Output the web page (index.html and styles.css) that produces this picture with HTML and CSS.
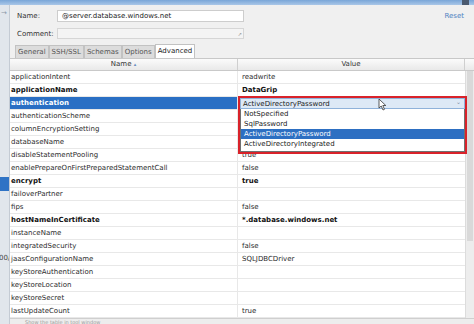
FILE: index.html
```html
<!DOCTYPE html>
<html lang="en">
<head>
    <meta charset="UTF-8">
    <title>Data Source Properties</title>
    <link rel="stylesheet" href="styles.css">
</head>
<body>
    <div class="titlebar">
        <span class="tb-icon"></span>
    </div>

    <div class="window">
        <div class="sidebar">
            <span class="side-arrow">&rarr;</span>
            <div class="side-sel"></div>
            <span class="side-text">00/</span>
        </div>

        <div class="panel">
            <div class="form-row">
                <label class="form-label">Name:</label>
                <div class="input">@server.database.windows.net</div>
                <a class="reset">Reset</a>
            </div>
            <div class="form-row">
                <label class="form-label">Comment:</label>
                <div class="input comment"><span class="expand">&#8599;</span></div>
            </div>

            <div class="tabs">
                <span class="tab">General</span>
                <span class="tab">SSH/SSL</span>
                <span class="tab">Schemas</span>
                <span class="tab">Options</span>
                <span class="tab active">Advanced</span>
            </div>

            <div class="table">
                <div class="thead">
                    <div class="th col-name">Name <span class="sort">&#9652;</span></div>
                    <div class="th col-value">Value</div>
                    <div class="th corner"></div>
                </div>
                <div class="tbody">
                    <div class="rows">
                        <div class="row"><div class="cell col-name">applicationIntent</div><div class="cell col-value">readwrite</div></div>
                        <div class="row bold"><div class="cell col-name">applicationName</div><div class="cell col-value">DataGrip</div></div>
                        <div class="row selected">
                            <div class="cell col-name">authentication</div>
                            <div class="cell col-value">
                                <div class="dropdown">
                                    <div class="combo">
                                        <span>ActiveDirectoryPassword</span>
                                        <span class="chevron">&#8964;</span>
                                    </div>
                                    <ul class="options">
                                        <li>NotSpecified</li>
                                        <li>SqlPassword</li>
                                        <li class="picked">ActiveDirectoryPassword</li>
                                        <li>ActiveDirectoryIntegrated</li>
                                    </ul>
                                </div>
                                <svg class="cursor" width="9" height="13" viewBox="0 0 9 13">
                                    <path d="M1 1 L1 10 L3.2 8 L5 12 L6.5 11.3 L4.8 7.5 L7.8 7.5 Z" fill="#fff" stroke="#333" stroke-width="0.8"/>
                                </svg>
                            </div>
                        </div>
                        <div class="row"><div class="cell col-name">authenticationScheme</div><div class="cell col-value"></div></div>
                        <div class="row"><div class="cell col-name">columnEncryptionSetting</div><div class="cell col-value"></div></div>
                        <div class="row"><div class="cell col-name">databaseName</div><div class="cell col-value"></div></div>
                        <div class="row"><div class="cell col-name">disableStatementPooling</div><div class="cell col-value">true</div></div>
                        <div class="row"><div class="cell col-name">enablePrepareOnFirstPreparedStatementCall</div><div class="cell col-value">false</div></div>
                        <div class="row bold"><div class="cell col-name">encrypt</div><div class="cell col-value">true</div></div>
                        <div class="row"><div class="cell col-name">failoverPartner</div><div class="cell col-value"></div></div>
                        <div class="row"><div class="cell col-name">fips</div><div class="cell col-value">false</div></div>
                        <div class="row bold"><div class="cell col-name">hostNameInCertificate</div><div class="cell col-value">*.database.windows.net</div></div>
                        <div class="row"><div class="cell col-name">instanceName</div><div class="cell col-value"></div></div>
                        <div class="row"><div class="cell col-name">integratedSecurity</div><div class="cell col-value">false</div></div>
                        <div class="row"><div class="cell col-name">jaasConfigurationName</div><div class="cell col-value">SQLJDBCDriver</div></div>
                        <div class="row"><div class="cell col-name">keyStoreAuthentication</div><div class="cell col-value"></div></div>
                        <div class="row"><div class="cell col-name">keyStoreLocation</div><div class="cell col-value"></div></div>
                        <div class="row"><div class="cell col-name">keyStoreSecret</div><div class="cell col-value"></div></div>
                        <div class="row"><div class="cell col-name">lastUpdateCount</div><div class="cell col-value">true</div></div>
                    </div>
                    <div class="scrollbar"><div class="thumb"></div></div>
                </div>
            </div>

            <div class="footer">Show the table in tool window</div>
        </div>
    </div>
</body>
</html>
```

FILE: styles.css
```css
* {
    margin: 0;
    padding: 0;
    box-sizing: border-box;
}

body {
    width: 474px;
    height: 324px;
    overflow: hidden;
    font-family: 'DejaVu Sans', sans-serif;
    font-size: 7px;
    color: #2b2b2b;
    background-color: #f0f0f0;
}

.titlebar {
    height: 5px;
    background: linear-gradient(to bottom, #7aa6d8, #a9c7e8);
    display: flex;
    justify-content: flex-end;
    padding-right: 5px;
}

.tb-icon {
    width: 7px;
    height: 5px;
    background-color: #4a5a70;
}

.window {
    display: flex;
    height: 319px;
}

/* left tree strip */
.sidebar {
    width: 10px;
    background-color: #e1e6ec;
    border-right: 1px solid #c4cbd4;
    display: flex;
    flex-direction: column;
    overflow: hidden;
}

.side-arrow {
    margin-top: 4px;
    font-size: 7px;
    color: #8a97a8;
    padding-left: 1px;
}

.side-sel {
    margin-top: 160px;
    height: 14px;
    background-color: #2f73c5;
}

.side-text {
    margin-top: 63px;
    color: #444;
    white-space: nowrap;
    margin-left: -1px;
}

.panel {
    flex: 1;
    display: flex;
    flex-direction: column;
    min-width: 0;
}

.form-row {
    display: flex;
    align-items: center;
    padding-left: 7px;
    height: 12px;
    margin-top: 5px;
}

.form-row + .form-row {
    margin-top: 6px;
}

.form-label {
    width: 40px;
    color: #333;
}

.input {
    width: 187px;
    height: 12px;
    line-height: 10px;
    padding-left: 4px;
    background-color: #ffffff;
    border: 1px solid #cdcdcd;
    color: #222;
}

.input.comment {
    height: 11px;
    background-color: #f4f4f4;
    border-color: #d6d6d6;
    display: flex;
    justify-content: flex-end;
}

.expand {
    font-size: 5px;
    color: #999;
    padding-right: 1px;
}

.reset {
    margin-left: auto;
    margin-right: 10px;
    color: #4f82c2;
}

.tabs {
    display: flex;
    margin-top: 5px;
    padding-left: 5px;
    height: 14px;
}

.tab {
    height: 13px;
    margin-top: 1px;
    line-height: 12px;
    padding: 0 2px;
    background-color: #dcdcdc;
    border: 1px solid #c2c2c2;
    border-bottom: none;
    color: #555;
}

.tab.active {
    background-color: #ffffff;
    color: #222;
    height: 14px;
    margin-top: 0;
}

.table {
    display: flex;
    flex-direction: column;
    border-top: 1px solid #c8c8c8;
    background-color: #ffffff;
}

.thead {
    display: flex;
    height: 12px;
    background: linear-gradient(to bottom, #fbfbfb, #e9e9e9);
    border-bottom: 1px solid #c9c9c9;
}

.th {
    text-align: center;
    line-height: 11px;
    color: #333;
    border-right: 1px solid #cfcfcf;
}

.sort {
    font-size: 5px;
    color: #6a8fc0;
}

.col-name {
    width: 228px;
}

.col-value {
    width: 227px;
}

.th.corner {
    flex: 1;
    border-right: none;
}

.tbody {
    display: flex;
    height: 247px;
}

.rows {
    width: 455px;
}

.row {
    display: flex;
    height: 13px;
    border-bottom: 1px solid #e8e8e8;
}

.cell {
    line-height: 12px;
    padding-left: 1px;
    white-space: nowrap;
    overflow: hidden;
}

.cell.col-name {
    border-right: 1px solid #e8e8e8;
}

.cell.col-value {
    padding-left: 4px;
}

.row.bold .cell {
    font-weight: bold;
    color: #111;
}

.row.selected .col-name {
    background-color: #2a6fc4;
    color: #ffffff;
    font-weight: bold;
}

.row.selected .col-value {
    position: relative;
    overflow: visible;
    z-index: 2;
}

/* combo popup over the rows below */
.dropdown {
    position: absolute;
    top: -1px;
    left: 0;
    width: 229px;
    border: 2px solid #d9222a;
    background-color: #ffffff;
}

.combo {
    display: flex;
    justify-content: space-between;
    height: 11px;
    line-height: 10px;
    padding: 0 3px 0 2px;
    background-color: #dde9f6;
    border: 1px solid #8fb2da;
    color: #1a1a1a;
}

.chevron {
    color: #7f8fa3;
    font-size: 6px;
    line-height: 6px;
}

.options {
    list-style: none;
    border: 1px solid #707070;
    border-top: none;
    padding-bottom: 2px;
}

.options li {
    height: 10px;
    line-height: 10px;
    padding-left: 3px;
    color: #1a1a1a;
}

.options li.picked {
    background-color: #2d6fc2;
    color: #ffffff;
}

.cursor {
    position: absolute;
    left: 140px;
    top: 1px;
}

.scrollbar {
    flex: 1;
    background-color: #ededed;
    border-left: 1px solid #dcdcdc;
}

.thumb {
    height: 170px;
    margin: 0 1px;
    background-color: #d9d9d9;
}

.footer {
    flex: 1;
    padding-left: 15px;
    font-size: 5px;
    line-height: 6px;
    color: #9a9a9a;
    background-color: #ededed;
    border-top: 1px solid #cfcfcf;
}
```
